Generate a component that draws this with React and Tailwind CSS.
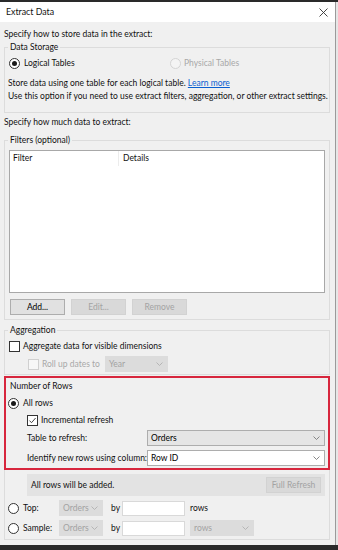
import React from 'react';

const Radio = ({ checked = false, disabled = false }) => (
  <span
    className={`flex h-[11px] w-[11px] shrink-0 items-center justify-center rounded-full border ${
      disabled ? 'border-[#d4d4d4] bg-[#f4f4f4]' : 'border-[#333333] bg-white'
    }`}
  >
    {checked && <span className="h-[5px] w-[5px] rounded-full bg-[#1a1a1a]" />}
  </span>
);

const Checkbox = ({ checked = false, disabled = false }) => (
  <span
    className={`flex h-[11px] w-[11px] shrink-0 items-center justify-center border ${
      disabled ? 'border-[#d0d0d0] bg-[#f7f7f7]' : 'border-[#333333] bg-white'
    }`}
  >
    {checked && (
      <svg width="9" height="9" viewBox="0 0 9 9" fill="none">
        <path d="M1.5 4.6l2 2.1L7.6 2" stroke="#333" strokeWidth="0.9" />
      </svg>
    )}
  </span>
);

const Chevron = ({ color = '#777' }) => (
  <svg width="7" height="4" viewBox="0 0 7 4" fill="none" className="shrink-0">
    <path d="M0.5 0.5l3 3 3-3" stroke={color} strokeWidth="0.9" />
  </svg>
);

// combo box in three flavours: enabled grey, enabled white, disabled
const Select = ({ value, kind = 'disabled', className = '' }) => {
  const styles = {
    grey: 'bg-[#e5e5e5] border-[#adadad] text-black',
    white: 'bg-white border-[#adadad] text-black',
    disabled: 'bg-[#dcdcdc] border-[#dcdcdc] text-[#a3a3a3]',
  };
  return (
    <div className={`flex h-[16px] items-center justify-between border pl-[3px] pr-[4px] ${styles[kind]} ${className}`}>
      <span>{value}</span>
      <Chevron color={kind === 'disabled' ? '#b0b0b0' : '#7a7a7a'} />
    </div>
  );
};

const Button = ({ children, disabled = false, className = '' }) => (
  <div
    className={`flex h-[16px] items-center justify-center border ${
      disabled ? 'border-[#d2d2d2] bg-[#d9d9d9] text-[#a3a3a3]' : 'border-[#adadad] bg-[#e1e1e1] text-black'
    } ${className}`}
  >
    {children}
  </div>
);

const GroupLabel = ({ children }) => (
  <div className="-mt-[7px] ml-[3px] h-[12px] w-fit bg-[#f0f0f0] px-[2px] leading-[12px]">{children}</div>
);

export default function App() {
  return (
    <div className="flex h-[550px] w-[338px] flex-col bg-[#2a2a2a] font-['Lato',sans-serif] text-[8.5px] text-[#111]">
      <div className="h-[2px] shrink-0" />
      <div className="flex h-[543px] shrink-0">
        <div className="flex w-[336px] flex-col border-r border-[#9a9a9a] bg-[#f0f0f0]">
          {/* title bar */}
          <div className="flex h-[20px] shrink-0 items-center justify-between bg-white pl-[6px] pr-[7px]">
            <span className="text-[8.8px]">Extract Data</span>
            <svg width="9" height="9" viewBox="0 0 9 9" fill="none">
              <path d="M0.5 0.5l8 8M8.5 0.5l-8 8" stroke="#333" strokeWidth="0.9" />
            </svg>
          </div>

          <div className="flex flex-col px-[4px] pt-[6px]">
            <div className="h-[12px] leading-[12px]">Specify how to store data in the extract:</div>

            {/* Data Storage */}
            <div className="mt-[7px] mr-[1px] flex flex-col border border-[#dcdcdc] pb-[9px]">
              <GroupLabel>Data Storage</GroupLabel>
              <div className="mt-[2px] flex h-[16px] items-center pl-[4px]">
                <div className="flex w-[161px] items-center gap-[4px]">
                  <Radio checked />
                  <span>Logical Tables</span>
                </div>
                <div className="flex items-center gap-[3px] text-[#a8a8a8]">
                  <Radio disabled />
                  <span>Physical Tables</span>
                </div>
              </div>
              <div className="mt-[6px] pl-[3px] leading-[13px]">
                <div>
                  Store data using one table for each logical table.{' '}
                  <span className="text-[#0a5fd0] underline">Learn more</span>
                </div>
                <div>Use this option if you need to use extract filters, aggregation, or other extract settings.</div>
              </div>
            </div>

            <div className="mt-[3px] h-[12px] leading-[12px]">Specify how much data to extract:</div>

            {/* Filters */}
            <div className="mt-[12px] mr-[1px] flex flex-col border border-[#dcdcdc] px-[4px] pb-[4px]">
              <div className="-mx-[4px]">
                <GroupLabel>Filters (optional)</GroupLabel>
              </div>
              <div className="mt-[4px] flex h-[143px] flex-col border border-[#a8a8a8] bg-white">
                <div className="flex h-[15px] items-center">
                  <div className="flex h-full w-[109px] items-center border-r border-[#ececec] pl-[3px]">Filter</div>
                  <div className="pl-[4px]">Details</div>
                </div>
              </div>
              <div className="mt-[6px] flex gap-[6px] pl-[1px]">
                <Button className="w-[55px]">Add...</Button>
                <Button disabled className="w-[55px]">Edit...</Button>
                <Button disabled className="w-[55px]">Remove</Button>
              </div>
            </div>

            {/* Aggregation */}
            <div className="mt-[10px] mr-[1px] flex flex-col border border-[#dcdcdc] pb-[2px]">
              <GroupLabel>Aggregation</GroupLabel>
              <div className="mt-[2px] flex h-[16px] items-center gap-[3px] pl-[4px]">
                <Checkbox />
                <span>Aggregate data for visible dimensions</span>
              </div>
              <div className="mt-[2px] flex h-[16px] items-center pl-[23px] text-[#a8a8a8]">
                <Checkbox disabled />
                <span className="ml-[3px] w-[63px]">Roll up dates to</span>
                <Select value="Year" className="w-[63px]" />
              </div>
            </div>

            {/* Number of Rows */}
            <div className="mt-[1px] mr-[1px] flex flex-col border border-[#dcdcdc] pb-[3px]">
              <div className="-mx-px -mt-px flex flex-col border-2 border-[#d7263d] pb-[2px]">
                <div className="mt-[2px] ml-[4px] h-[12px] leading-[12px]">Number of Rows</div>
                <div className="mt-[3px] flex h-[16px] items-center gap-[4px] pl-[2px]">
                  <Radio checked />
                  <span>All rows</span>
                </div>
                <div className="mt-[1px] flex h-[16px] items-center gap-[3px] pl-[21px]">
                  <Checkbox checked />
                  <span>Incremental refresh</span>
                </div>
                <div className="mt-[2px] flex h-[16px] items-center pl-[21px] pr-[3px]">
                  <span className="w-[120px]">Table to refresh:</span>
                  <Select value="Orders" kind="grey" className="flex-1" />
                </div>
                <div className="mt-[4px] flex h-[16px] items-center pl-[21px] pr-[3px]">
                  <span className="w-[120px]">Identify new rows using column:</span>
                  <Select value="Row ID" kind="white" className="flex-1" />
                </div>
              </div>

              <div className="mt-[4px] mr-[4px] ml-[22px] flex h-[22px] items-center justify-between bg-[#e3e3e3] pl-[4px] pr-[4px]">
                <span>All rows will be added.</span>
                <Button disabled className="h-[15px] w-[55px]">Full Refresh</Button>
              </div>

              <div className="mt-[4px] flex h-[16px] items-center pl-[3px]">
                <Radio />
                <span className="ml-[4px] w-[36px]">Top:</span>
                <Select value="Orders" className="w-[44px]" />
                <span className="ml-[8px] w-[11px]">by</span>
                <div className="h-[15px] w-[63px] border border-[#d9d9d9] bg-white" />
                <span className="ml-[5px]">rows</span>
              </div>
              <div className="mt-[4px] flex h-[16px] items-center pl-[3px]">
                <Radio />
                <span className="ml-[4px] w-[36px]">Sample:</span>
                <Select value="Orders" className="w-[44px]" />
                <span className="ml-[8px] w-[11px]">by</span>
                <div className="h-[15px] w-[63px] border border-[#d9d9d9] bg-white" />
                <Select value="rows" className="ml-[5px] w-[64px]" />
              </div>
            </div>
          </div>
        </div>
        <div className="flex-1 bg-[#e6e6e6]" />
      </div>
      <div className="flex-1" />
    </div>
  );
}
